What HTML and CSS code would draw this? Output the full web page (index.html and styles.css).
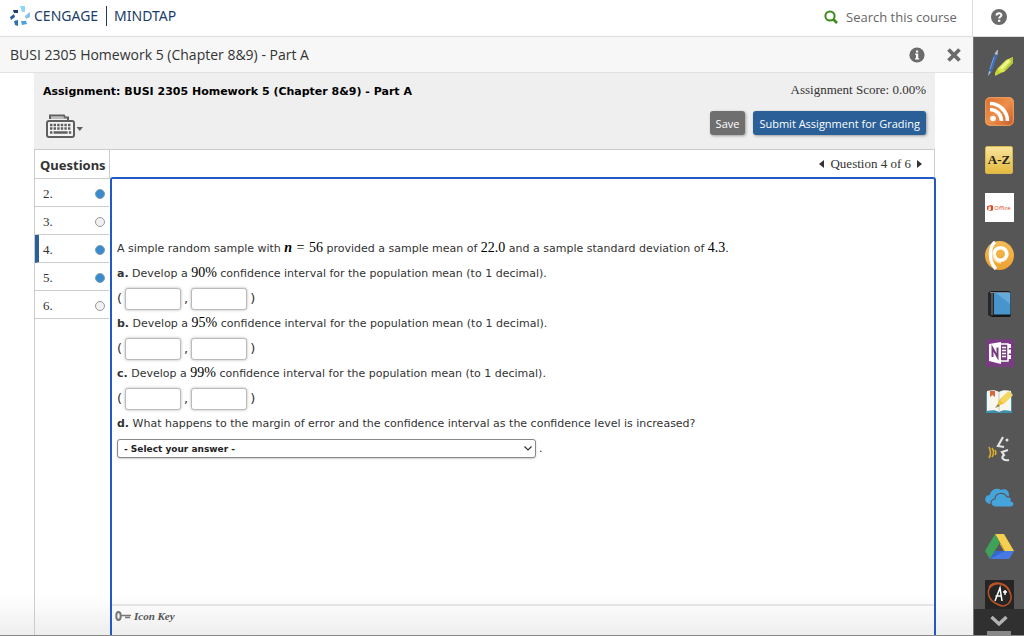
FILE: index.html
```html
<!DOCTYPE html>
<html lang="en">
<head>
    <meta charset="UTF-8">
    <meta name="viewport" content="width=device-width, initial-scale=1.0">
    <title>BUSI 2305 Homework 5 (Chapter 8&amp;9) - Part A</title>
    <link rel="stylesheet" href="styles.css">
</head>
<body>
    <header class="topbar">
        <a href="#" class="brand">
            <svg class="brand_mark" viewBox="0 0 20 20" width="20" height="20" aria-hidden="true">
                <path fill="#90d6f5" d="M10 0l5 0 0 6-3 0z"/>
                <path fill="#84c4ea" d="M20 6v5l-4 2-1-3z"/>
                <path fill="#4aa3dd" d="M11 15l5 0 1 3-5 1z"/>
                <path fill="#2d70b5" d="M4 15l4-1 0 6-3-1z"/>
                <path fill="#2c5c95" d="M0 11l4-3 1 3-4 3z"/>
                <path fill="#1b3d69" d="M3 4l5 0 0 3-4 0z"/>
            </svg>
            <span class="brand_name">CENGAGE</span>
            <span class="brand_product">MINDTAP</span>
        </a>
        <label class="search">
            <svg viewBox="0 0 14 14" width="14" height="14" aria-hidden="true">
                <circle cx="6" cy="6" r="4.6" fill="none" stroke="#3f8a1d" stroke-width="2"/>
                <path d="M9 9l4 4" stroke="#3f8a1d" stroke-width="2.6"/>
            </svg>
            <input type="text" placeholder="Search this course" aria-label="Search this course">
        </label>
        <button class="help" aria-label="Help">
            <svg viewBox="0 0 16 16" width="16" height="16">
                <circle cx="8" cy="8" r="8" fill="#6b6b6b"/>
                <path d="M5.6 6.4C5.6 3.4 10.5 3.5 10.4 6.3 10.3 7.9 8.2 7.7 8.2 9.5" fill="none" stroke="#fff" stroke-width="2"/>
                <path d="M7 10.8h2.3v2H7z" fill="#fff"/>
            </svg>
        </button>
    </header>

    <div class="page">
        <main class="main">
            <div class="titlebar">
                <h1>BUSI 2305 Homework 5 (Chapter 8&amp;9) - Part A</h1>
                <button aria-label="Information">
                    <svg viewBox="0 0 16 16" width="16" height="16">
                        <circle cx="8" cy="8" r="7.6" fill="#6b6b6b"/>
                        <path d="M7 3.4h2.2v2H7zM6.2 6.6h3v4.6h1v1.4H6v-1.4h1V8h-.8z" fill="#fff"/>
                    </svg>
                </button>
                <button aria-label="Close">
                    <svg viewBox="0 0 14 14" width="14" height="14">
                        <path d="M1.5 1.5l11 11M12.5 1.5l-11 11" stroke="#6b6b6b" stroke-width="3.8"/>
                    </svg>
                </button>
            </div>

            <div class="assignment">
                <div class="assignment_head">
                    <div class="assignment_left">
                        <h2>Assignment: BUSI 2305 Homework 5 (Chapter 8&amp;9) - Part A</h2>
                        <button class="keyboard" aria-label="Keyboard shortcuts">
                            <svg viewBox="0 0 38 24" width="38" height="24">
                                <path d="M4 5V1.5h14l1 2h3V6" fill="none" stroke="#5f5f5f" stroke-width="2"/>
                                <path d="M5 4h15" stroke="#8a8a8a" stroke-width="1"/>
                                <rect x="1" y="7" width="27" height="16" rx="2" fill="#f4f4f4" stroke="#5f5f5f" stroke-width="2"/>
                                <path d="M4 11h21M4 14.5h21" stroke="#5f5f5f" stroke-width="2.4" stroke-dasharray="2.4 1.2"/>
                                <path d="M4 18.5h2.4m1.2 0h14m1.2 0h2.4" stroke="#5f5f5f" stroke-width="2.4"/>
                                <path d="M30.5 13H37l-3.2 4z" fill="#5f5f5f"/>
                            </svg>
                        </button>
                    </div>
                    <div class="assignment_right">
                        <p class="score">Assignment Score: 0.00%</p>
                        <div class="actions">
                            <button class="btn">Save</button>
                            <button class="btn btn_submit">Submit Assignment for Grading</button>
                        </div>
                    </div>
                </div>

                <div class="assignment_body">
                    <nav class="questions">
                        <h3>Questions</h3>
                        <a href="#">2.<i class="dot dot_done"></i></a>
                        <a href="#">3.<i class="dot"></i></a>
                        <a href="#" class="on">4.<i class="dot dot_done"></i></a>
                        <a href="#">5.<i class="dot dot_done"></i></a>
                        <a href="#">6.<i class="dot"></i></a>
                    </nav>

                    <section class="question">
                        <div class="pager">
                            <a href="#" aria-label="Previous question"><svg viewBox="0 0 5 8" width="5" height="8"><path d="M5 0v8L0 4z" fill="#333"/></svg></a>
                            <span>Question 4 of 6</span>
                            <a href="#" aria-label="Next question"><svg viewBox="0 0 5 8" width="5" height="8"><path d="M0 0v8l5-4z" fill="#333"/></svg></a>
                        </div>
                        <div class="panel">
                            <div class="panel_text">
                                <p>A simple random sample with <span class="math"><em>n</em> <span class="eq">=</span> 56</span> provided a sample mean of <span class="math">22.0</span> and a sample standard deviation of <span class="math">4.3</span>.</p>
                                <p><b>a.</b> Develop a <span class="math">90%</span> confidence interval for the population mean (to 1 decimal).</p>
                                <div class="interval">
                                    <span>(</span><input type="text" aria-label="a. lower limit"><span>,</span><input type="text" aria-label="a. upper limit"><span>)</span>
                                </div>
                                <p><b>b.</b> Develop a <span class="math">95%</span> confidence interval for the population mean (to 1 decimal).</p>
                                <div class="interval">
                                    <span>(</span><input type="text" aria-label="b. lower limit"><span>,</span><input type="text" aria-label="b. upper limit"><span>)</span>
                                </div>
                                <p><b>c.</b> Develop a <span class="math">99%</span> confidence interval for the population mean (to 1 decimal).</p>
                                <div class="interval">
                                    <span>(</span><input type="text" aria-label="c. lower limit"><span>,</span><input type="text" aria-label="c. upper limit"><span>)</span>
                                </div>
                                <p><label for="answer"><b>d.</b> What happens to the margin of error and the confidence interval as the confidence level is increased?</label></p>
                                <div class="choice">
                                    <span class="select">
                                        <select id="answer">
                                            <option>- Select your answer -</option>
                                        </select>
                                        <svg viewBox="0 0 8 5" width="8" height="5" aria-hidden="true"><path d="M.5.5L4 4 7.5.5" fill="none" stroke="#333" stroke-width="1.2"/></svg>
                                    </span>
                                    <span>.</span>
                                </div>
                            </div>
                            <a href="#" class="icon_key">
                                <svg viewBox="0 0 16 10" width="16" height="10" aria-hidden="true">
                                    <ellipse cx="3.5" cy="5" rx="2.2" ry="4" fill="none" stroke="#777" stroke-width="2"/>
                                    <path d="M6 4.5h10M10 6.5h5" stroke="#777" stroke-width="1.5"/>
                                </svg>
                                <span>Icon Key</span>
                            </a>
                        </div>
                    </section>
                </div>
            </div>
        </main>

        <aside class="rail">
            <div class="rail_list">
                <!-- pen and highlighter -->
                <button aria-label="Highlights and notes"><svg viewBox="0 0 29 29">
                    <path d="M3 27l1-6L9.500 5l3 1L7 22z" fill="#3f70b9"/><path d="M9.500 5L12 1l1 .5-.5 4.500z" fill="#b9c2cb"/><path d="M3 27l1-5 2 1z" fill="#bbb"/><path d="M9 8L5 20" stroke="#779ed3"/>
                    <path d="M12 20l9-9 7-3 0 6-9 9-4 1z" fill="#dbe84d"/><path d="M15 19l8-8 2 1-8 8z" fill="#f0f6a0"/><path d="M12 20l4 4-2 1-4 2 0-3z" fill="#c3d636"/><path d="M25 10l3-2v6l-8 8-1-1 7-8z" fill="#b4c53c"/>
                </svg></button>
                <!-- rss -->
                <button aria-label="RSS feed"><svg viewBox="0 0 29 29">
                    <defs><linearGradient id="rss" x1="0" y1="0" x2="1" y2="1"><stop offset="0" stop-color="#dc6a31"/><stop offset=".5" stop-color="#ee9149"/><stop offset="1" stop-color="#c95525"/></linearGradient></defs>
                    <rect width="29" height="29" rx="5" fill="url(#rss)"/><rect x=".7" y=".7" width="27.6" height="27.6" rx="4.5" fill="none" stroke="#e6a064"/>
                    <circle cx="8" cy="21.5" r="2.8" fill="#fff"/><path d="M5 12.500A11.500 11.500 0 0 1 16.500 24M5 6.500A17.500 17.500 0 0 1 22.500 24" fill="none" stroke="#fff" stroke-width="3.6"/>
                </svg></button>
                <!-- glossary -->
                <button class="glossary">A-Z</button>
                <!-- office -->
                <button class="office"><svg viewBox="0 0 8 8"><path d="M0 2l5-2 3 1v6L5 8 0 6.500l5 .4V1.500L2 2.500v3.500L0 6.500z" fill="#dc4521"/></svg>Office</button>
                <!-- orange disc -->
                <button aria-label="Study center"><svg viewBox="0 0 29 29">
                    <defs><linearGradient id="disc" x1="0" y1="0" x2="0" y2="1"><stop offset="0" stop-color="#f5bb55"/><stop offset="1" stop-color="#eda130"/></linearGradient></defs>
                    <circle cx="14.5" cy="14.5" r="14.5" fill="url(#disc)"/>
                    <path d="M10 1C5 5 5 14 6 19c1 4 3 7 5 9" fill="none" stroke="#fff" stroke-width="3.4"/>
                    <circle cx="15.5" cy="13" r="6.3" fill="none" stroke="#fff" stroke-width="3.6"/>
                    <path d="M8 13c0 5 3 9 8 9" fill="none" stroke="#fbe2b2" stroke-width="1.5"/>
                </svg></button>
                <!-- book -->
                <button aria-label="Reader"><svg viewBox="0 0 29 29">
                    <path d="M3 3l3-2h18l2 2v22l-1 2H7l-4-2z" fill="#171717"/><path d="M7 2.500h18.500v22H7z" fill="#4795cc"/><path d="M11 3h14v11z" fill="#65aadb"/><path d="M3 3h6v23H6l-3-1z" fill="#262626"/><path d="M5 2.500h19M7 3v22" stroke="#71869a"/>
                </svg></button>
                <!-- onenote -->
                <button aria-label="OneNote"><svg viewBox="0 0 29 29">
                    <path d="M1 1h28v28H1z" fill="#783d80"/><path d="M15 6h8v17h-8" fill="#783d80" stroke="#fff" stroke-width="1.5"/><path d="M17 9.500h4M17 12.500h4M17 15.500h4M17 18.500h4" stroke="#fff" stroke-width="1.3"/><path d="M23 6h3v4h-3zM23 11.500h3v4h-3zM23 17h3v4h-3z" fill="#fff"/><path d="M4 6l12-2v22L4 23z" fill="#fff"/><path d="M7.500 19v-9l5 9v-9.500" fill="none" stroke="#783d80" stroke-width="2"/>
                </svg></button>
                <!-- notebook -->
                <button aria-label="Notebook"><svg viewBox="0 0 29 29">
                    <path d="M1 5h26v21H1z" fill="#3e91ac"/><path d="M2 4c5-1 9-1 12 1 3-2 7-2 12-1v20c-5-1-9-1-12 1-3-2-7-2-12-1z" fill="#f8f6ed"/><path d="M14 5v20" stroke="#cbc9c1"/><path d="M5 4h5v6L7.500 8 5 10z" fill="#d5683c"/><path d="M12 19l2-6 9-8 4 4-9 8z" fill="#ebc33f"/><path d="M15 13l9-9 4 4-9 9z" fill="#f4d75f"/><path d="M10 21l3-4 2 2z" fill="#8e8340"/>
                </svg></button>
                <!-- read speaker -->
                <button aria-label="ReadSpeaker"><svg viewBox="0 0 29 29">
                    <path d="M18 2l-5 9 6 1M23 15l-6 2 2 3c-4 3 0 6 5 5" fill="none" stroke="#e3e3e3" stroke-width="2.2"/><circle cx="22" cy="5" r="1.5" fill="#e3e3e3"/>
                    <path d="M4 15c-1 2-1 4 0 5M7 13c-2 3-2 6 0 9M10 12c-2 4-2 8 0 11" transform="matrix(-1 0 0 1 14 0)" fill="none" stroke="#dcae2d" stroke-width="1.6"/>
                </svg></button>
                <!-- onedrive -->
                <button aria-label="OneDrive"><svg viewBox="0 0 29 29">
                    <path d="M5 21C-2 20-1 12 5 12c0-5 7-8 11-5 5-2 8 1 8 5v9z" fill="#45a4dc"/><path d="M11 24c-6 0-7-7-1-8 0-6 9-8 12-2 4-1 5 2 4 4 5 1 3 6 0 6z" fill="#45a4dc" stroke="#565656" stroke-width="1.2"/>
                </svg></button>
                <!-- google drive -->
                <button aria-label="Google Drive"><svg viewBox="0 0 29 29">
                    <path d="M10 2h9l10 17h-9z" fill="#f7cf50"/><path d="M10 2l5 9-10 16-5-8z" fill="#3fa15a"/><path d="M10 19h19l-5 8H5z" fill="#4779e6"/><path d="M10 19h10L5 27z" fill="#3767cd"/><path d="M15 11l5 8h-5z" fill="#edbb37"/><path d="M14.500 11.500L19 19H10z" fill="#565656"/>
                </svg></button>
                <!-- a plus grade -->
                <button aria-label="Grades"><svg viewBox="0 0 29 29">
                    <path d="M0 0h29v29H0z" fill="#252525"/><path d="M4 7c6-7 18-4 21 5 4 11-5 17-13 12C3 20 0 9 8 5c7-3 14 0 17 8" fill="none" stroke="#bf5227" stroke-width="1.5"/><path d="M10 21l5-13 2 13M10.500 16h6M18 12h4M20 10v5" fill="none" stroke="#fff" stroke-width="1.5"/>
                </svg></button>
            </div>
            <button class="rail_more" aria-label="More apps">
                <svg viewBox="0 0 18 12" width="18" height="12"><path d="M1.500 2L9 9l7.500-7" fill="none" stroke="#b2b2b2" stroke-width="3.4"/></svg>
                <i></i>
            </button>
        </aside>
    </div>
</body>
</html>
```

FILE: styles.css
```css
* {
    box-sizing: border-box;
}
body {
    margin: 0;
    height: 100vh;
    display: flex;
    flex-direction: column;
    overflow: hidden;
    color: #333;
    font-family: "Open Sans", "Noto Sans", sans-serif;
    border-bottom: 1px solid #888;
}
h1, h2, h3, p {
    margin: 0;
}
a {
    color: inherit;
    text-decoration: none;
}
button {
    padding: 0;
    border: 0;
    background: none;
    cursor: pointer;
}
svg {
    display: block;
}

/* top bar */
.topbar {
    display: flex;
    align-items: stretch;
    flex: none;
    height: 37px;
    border-bottom: 1px solid #ddd;
}
.brand {
    display: flex;
    align-items: center;
    margin-right: auto;
    padding: 0 0 4px 10px;
    color: #1b3d69;
    font-family: "Noto Sans", sans-serif;
    font-size: 14px;
    line-height: 20px;
}
.brand_name {
    padding: 0 8px 0 4px;
    border-right: 1px solid #1b3d69;
}
.brand_product {
    padding-left: 7px;
}
.search {
    display: flex;
    align-items: center;
    padding-bottom: 2px;
}
.search input {
    width: 126px;
    margin-left: 8px;
    padding: 0;
    border: 0;
    outline: 0;
    font: 13px "Open Sans", sans-serif;
}
.search input::placeholder {
    color: #666;
}
.help {
    display: flex;
    align-items: center;
    justify-content: center;
    width: 52px;
    padding-bottom: 3px;
    border-left: 1px solid #ddd;
}

.page {
    display: flex;
    flex: 1;
    min-height: 0;
}
.main {
    display: flex;
    flex-direction: column;
    flex: 1;
    min-width: 0;
}
.titlebar {
    display: flex;
    align-items: center;
    gap: 22px;
    flex: none;
    height: 36px;
    padding: 0 12px 0 10px;
    border-bottom: 1px solid #e2e2e2;
    background: #f7f7f7;
}
.titlebar h1 {
    margin-right: auto;
    font-size: 14px;
    font-weight: normal;
}

/* assignment */
.assignment {
    display: flex;
    flex-direction: column;
    flex: 1;
    min-height: 0;
    padding: 0 37px 0 34px;
    background: linear-gradient(transparent calc(100% - 40px), #eee);
}
.assignment_head {
    display: flex;
    justify-content: space-between;
    height: 77px;
    margin-right: 1px;
    padding: 9px 9px 0 9px;
    border-bottom: 1px solid #ccc;
    background: #efefef;
}
.assignment_head h2 {
    color: #000;
    font: bold 11px/20px Verdana, "DejaVu Sans", sans-serif;
}
.keyboard {
    margin: 12px 0 0 3px;
}
.assignment_right {
    text-align: right;
}
.score {
    font: 13px/16px "Droid Serif", "Liberation Serif", serif;
}
.actions {
    display: flex;
    justify-content: flex-end;
    gap: 8px;
    margin-top: 13px;
}
.btn {
    height: 24px;
    padding: 0 6px;
    border-radius: 3px;
    color: #fff;
    background: #6f6f6f;
    box-shadow: 1px 1px 3px rgba(0,0,0,.35);
    font: 11px "Open Sans", sans-serif;
}
.btn_submit {
    background: #2a5f97;
}
.assignment_body {
    display: flex;
    flex: 1;
    min-height: 0;
}

/* question list */
.questions {
    flex: none;
    width: 76px;
    border-left: 1px solid #ccc;
}
.questions h3 {
    height: 29px;
    padding-left: 5px;
    border-right: 1px solid #ccc;
    border-bottom: 1px solid #ccc;
    font: bold 13px/31px "Noto Sans", sans-serif;
}
.questions a {
    display: flex;
    align-items: center;
    justify-content: space-between;
    height: 28px;
    margin-right: 1px;
    padding: 2px 4px 0 8px;
    border-bottom: 1px solid #ccc;
    font: 13px "Droid Serif", "Liberation Serif", serif;
}
.questions .on {
    padding-left: 4px;
    border-left: 4px solid #2a5f97;
}
.dot {
    width: 10px;
    height: 10px;
    border: 1px solid #999;
    border-radius: 50%;
    background: #f1f1f1;
}
.dot_done {
    border-color: #7f9fb5;
    background: #398ccb;
}

/* question */
.question {
    display: flex;
    flex-direction: column;
    flex: 1;
    min-width: 0;
}
.pager {
    display: flex;
    align-items: center;
    justify-content: flex-end;
    gap: 6px;
    flex: none;
    height: 27px;
    margin-right: 1px;
    padding-right: 12px;
    border-right: 1px solid #ccc;
    font: 13px "Droid Serif", "Liberation Serif", serif;
}
.panel {
    display: flex;
    flex-direction: column;
    flex: 1;
    border: 2px solid #2359c4;
    border-bottom: 0;
    border-radius: 3px 3px 0 0;
}
.panel_text {
    flex: 1;
    padding: 57px 5px 0;
    font: 11px/25px Verdana, "DejaVu Sans", sans-serif;
}
.math {
    color: #000;
    font-family: "Liberation Serif", serif;
    font-size: 14px;
    line-height: 20px;
}
.math em {
    font-weight: bold;
}
.eq {
    margin: 0 1px;
}
.interval, .choice {
    display: flex;
    align-items: center;
    gap: 3px;
    height: 25px;
}
.interval {
    font-size: 13px;
}
.interval input {
    width: 56px;
    height: 22px;
    border: 1px solid #bbb;
    border-radius: 3px;
    box-shadow: 0 0 3px rgba(0,0,0,.3);
}
.select {
    display: grid;
    align-items: center;
    width: 419px;
}
.select select, .select svg {
    grid-area: 1 / 1;
}
.select select {
    width: 100%;
    height: 19px;
    padding: 0 6px;
    border: 1px solid #888;
    border-radius: 3px;
    appearance: none;
    color: #222;
    background: #fff;
    box-shadow: 0 1px 2px rgba(0,0,0,.2);
    font: bold 9px Verdana, "DejaVu Sans", sans-serif;
}
.select svg {
    justify-self: end;
    margin-right: 4px;
    pointer-events: none;
}
.icon_key {
    display: flex;
    align-items: center;
    gap: 3px;
    height: 31px;
    padding: 0 0 9px 3px;
    border-top: 2px solid #e5e5e5;
    color: #555;
    font: italic bold 11px "Droid Serif", "Liberation Serif", serif;
}

/* app rail */
.rail {
    display: flex;
    flex-direction: column;
    flex: none;
    width: 51px;
    border-left: 1px solid #777;
    background: #565656;
}
.rail_list {
    display: flex;
    flex-direction: column;
    align-items: center;
    justify-content: space-between;
    flex: 1;
    min-height: 0;
    padding-top: 12px;
}
.rail_list button {
    width: 29px;
    height: 29px;
    flex: none;
}
.rail_list .glossary {
    width: 28px;
    height: 28px;
    border: 1px solid #d9b750;
    border-radius: 2px;
    color: #222;
    background: linear-gradient(#f8e49b, #e5b93f);
    font: bold 13px "Liberation Serif", serif;
}
.rail_list .office {
    display: flex;
    align-items: center;
    justify-content: center;
    gap: 1px;
    color: #dc4521;
    background: #fff;
    font: 6px "Open Sans", sans-serif;
}
.office svg {
    width: 6px;
}
.rail_more {
    display: flex;
    flex-direction: column;
    align-items: center;
    justify-content: space-between;
    height: 26px;
    padding-top: 6px;
    background: #303030;
}
.rail_more i {
    width: 24px;
    height: 4px;
    background: #888;
}
```
